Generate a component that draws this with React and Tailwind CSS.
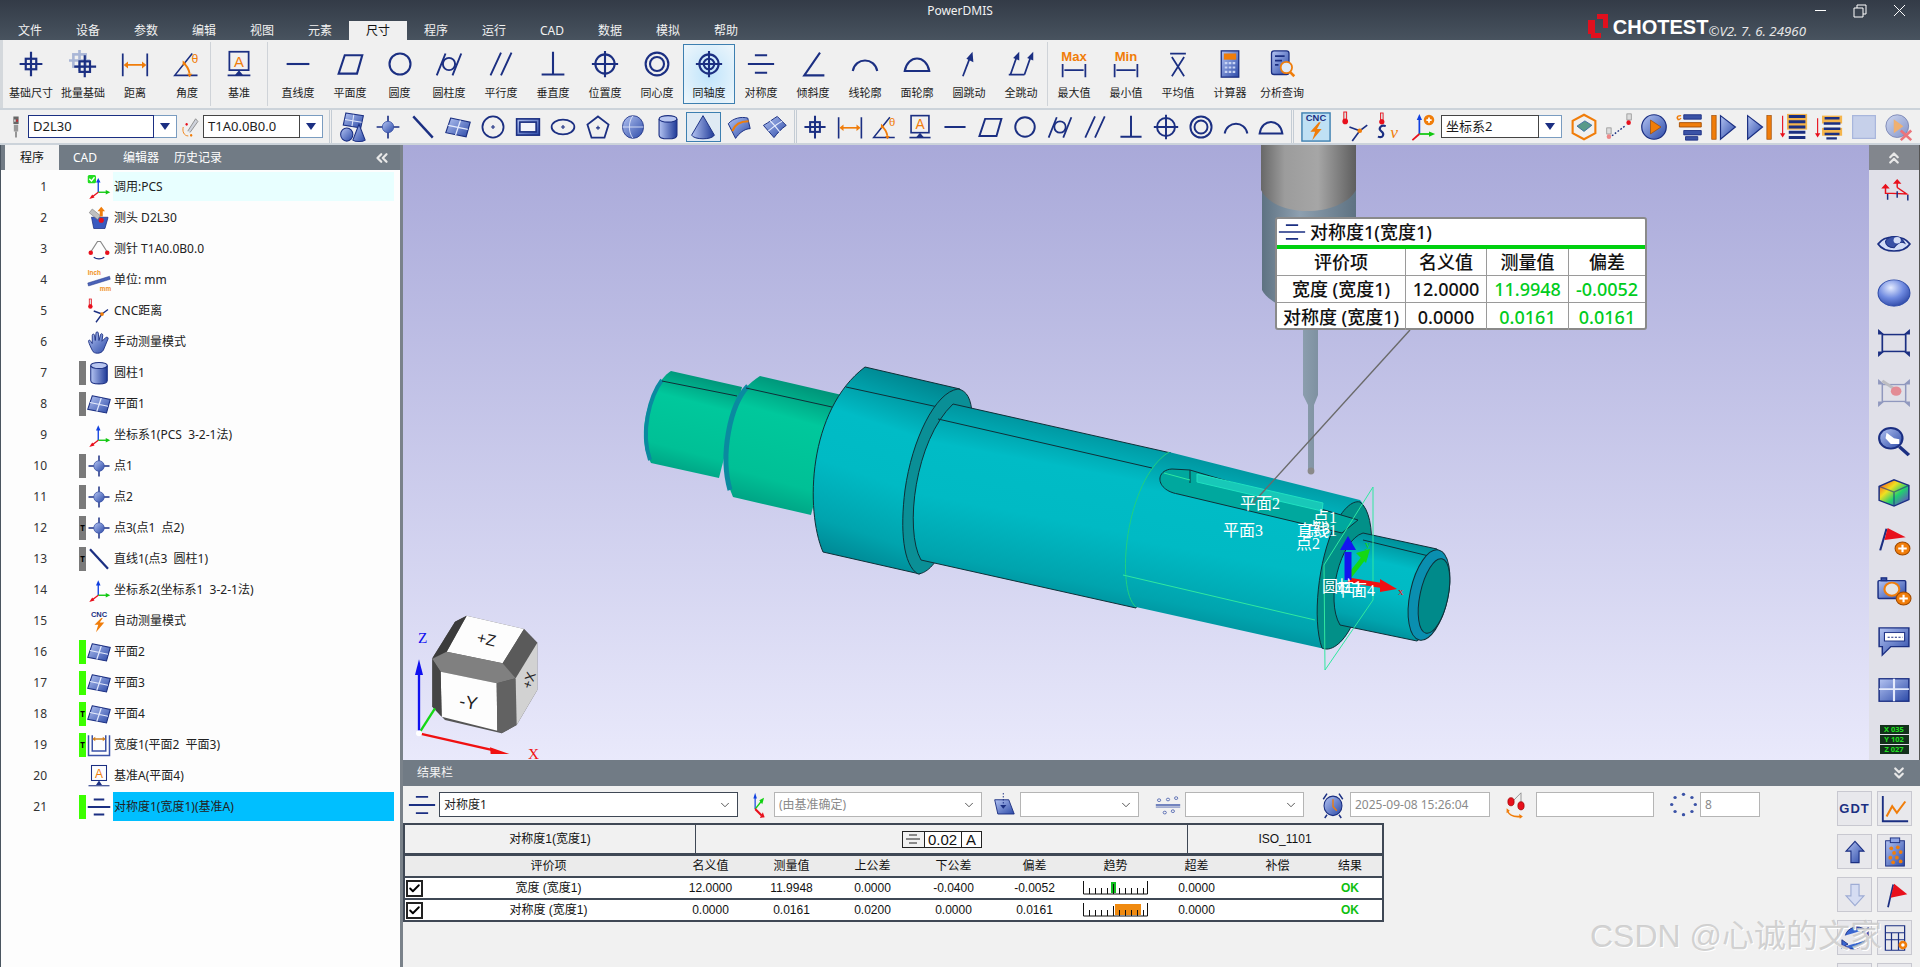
import React from 'react';
import { ChevronDown, ChevronsLeft, ChevronsUp, ChevronsDown, Check } from 'lucide-react';

const N = '#1b2f82';
const O = '#f07d0a';
const R = '#e8101c';

// icon drawings, all on a 32 box
const G = {
  base: <g strokeWidth="2.5"><path d="M16 2V30M3 16H29" /><rect x="10" y="10" width="12" height="12" /></g>,
  batch: <g><g stroke="#a9b6d6" strokeWidth="3"><path d="M12 0V24M0 12H24" /><rect x="5" y="5" width="14" height="14" /></g><g strokeWidth="2.5"><path d="M18 6V31M6 19H31" /><rect x="12" y="13" width="12" height="12" /></g></g>,
  dist: <g strokeWidth="2"><path d="M2 4V30M30 4V30" /><path d="M6 17H26" stroke={O} /><path d="M3 17L8 13V21ZM29 17L24 13V21Z" fill={O} stroke="none" /></g>,
  angle: <g strokeWidth="1.8"><path d="M22 4L2 29H28" /><path d="M12 15C16 18 18 22 19 27" stroke={O} strokeWidth="2.2" /><path d="M11 12L15 15L11 18ZM16 27H22L19 31Z" fill={O} stroke="none" /><text x="21" y="15" fontSize="14" fill={O} stroke="none" fontFamily="Liberation Sans">θ</text></g>,
  datum: <g strokeWidth="2"><rect x="5" y="2" width="22" height="21" /><text x="16" y="19" fontSize="17" textAnchor="middle" fill={O} stroke="none" fontFamily="Liberation Sans">A</text><path d="M16 23L11 29H21Z" fill={N} stroke="none" /><path d="M3 29H29" /></g>,
  straight: <path d="M3 16H29" strokeWidth="2.4" />,
  flat: <path d="M10 6H30L24 27H3Z" strokeWidth="2.4" />,
  circle: <circle cx="16" cy="16" r="12" strokeWidth="2.4" />,
  cyl: <g strokeWidth="2.2"><path d="M2 29L12 4M20 29L30 4" /><circle cx="16" cy="16" r="7" /></g>,
  parallel: <path d="M4 29L16 3M16 29L28 3" strokeWidth="2.2" />,
  perp: <path d="M16 2V28M3 28H29" strokeWidth="2.4" />,
  pos: <g strokeWidth="2.4"><circle cx="16" cy="16" r="11" /><path d="M16 1V31M1 16H31" /></g>,
  conc: <g strokeWidth="2.4"><circle cx="16" cy="16" r="13" /><circle cx="16" cy="16" r="8" /></g>,
  coax: <g strokeWidth="2.4"><circle cx="16" cy="16" r="11" /><circle cx="16" cy="16" r="6" /><path d="M16 1V31M1 16H31" /></g>,
  sym: <path d="M9 6H23M1 16H31M9 26H23" strokeWidth="2.4" />,
  incl: <path d="M24 3L6 29H29" strokeWidth="2.4" />,
  lprof: <path d="M2 24C5 8 27 8 30 24" strokeWidth="2.4" />,
  sprof: <path d="M2 24C5 5 27 5 30 24ZM2 24H30" strokeWidth="2.4" />,
  runout: <g strokeWidth="2"><path d="M9 30L17 9" /><path d="M20 2L21 14L13 10Z" fill={N} stroke="none" /></g>,
  total: <g strokeWidth="2"><path d="M4 28L11 8M20 28L27 8M2 28H20" /><path d="M14 2L14 12L7 9ZM30 2L30 12L23 9Z" fill={N} stroke="none" /></g>,
  max: <g strokeWidth="2"><text x="16" y="13" fontSize="15" fontWeight="700" textAnchor="middle" fill={O} stroke="none" fontFamily="Liberation Sans">Max</text><path d="M3 16V31M29 16V31M5 23H27" /></g>,
  min: <g strokeWidth="2"><text x="16" y="13" fontSize="15" fontWeight="700" textAnchor="middle" fill={O} stroke="none" fontFamily="Liberation Sans">Min</text><path d="M3 16V31M29 16V31M5 23H27" /></g>,
  avg: <path d="M7 4H25M9 8L23 30M23 8L9 30" strokeWidth="2" />,
  calc: <g><rect x="6" y="1" width="20" height="30" fill="url(#bl)" strokeWidth="1.5" /><rect x="9" y="4" width="14" height="7" fill={O} stroke="none" /><path d="M10 15H22M10 20H22M10 25H22" stroke="#c8d4f4" strokeWidth="2.5" strokeDasharray="3 1.5" /></g>,
  analyze: <g><rect x="4" y="1" width="20" height="27" rx="3" fill="url(#bl)" strokeWidth="1.5" /><path d="M8 7H19M8 12H16M8 17H12" stroke={N} strokeWidth="2" /><circle cx="21" cy="20" r="6.5" fill="#dfe9f7" stroke={O} strokeWidth="2" /><path d="M25 25L30 30" stroke={O} strokeWidth="3" /></g>,

  fgroup: <g strokeWidth="1.2"><path d="M9 1L29 4L26 17L6 14Z" fill="url(#bl)" /><path d="M18 3L16 15M8 8L27 11" stroke="#dfe6fa" /><circle cx="10" cy="24" r="7" fill="url(#bl)" /><path d="M24 13L31 30C28 32 20 32 17 30Z" fill="url(#bl)" /></g>,
  fpoint: <g strokeWidth="2"><path d="M16 2V30M2 16H30" /><circle cx="16" cy="16" r="7" fill="url(#bl)" stroke="#3a52a6" strokeWidth="1" /></g>,
  fline: <path d="M4 3L28 29" strokeWidth="3" />,
  fplane: <g strokeWidth="1.4"><path d="M7 5L31 10L26 28L1 23Z" fill="url(#bl)" /><path d="M19 8L13 26M4 14L28 19" stroke="#e4eafc" strokeWidth="1.6" /></g>,
  fcircle: <g strokeWidth="2.2"><circle cx="16" cy="16" r="13" /><path d="M13.5 16H18.5M16 13.5V18.5" strokeWidth="1.4" /></g>,
  frect: <g strokeWidth="2"><rect x="2" y="6" width="28" height="20" fill="url(#bl)" /><rect x="6" y="10" width="20" height="12" fill="#f2f4fb" /></g>,
  fellipse: <g strokeWidth="2.2"><ellipse cx="16" cy="16" rx="14" ry="9" /><path d="M13.5 16H18.5M16 13.5V18.5" strokeWidth="1.4" /></g>,
  fpoly: <g strokeWidth="2.2"><path d="M16 3L29 13L24 29H8L3 13Z" /><path d="M13.5 17H18.5M16 14.5V19.5" strokeWidth="1.4" /></g>,
  fsphere: <g strokeWidth="1"><ellipse cx="16" cy="16" rx="13" ry="14" fill="url(#bl)" /><path d="M16 2C10 10 10 22 16 30M3 16H29" stroke="#e4eafc" /></g>,
  fcyl: <g strokeWidth="1.4"><path d="M5 6V26C5 32 27 32 27 26V6" fill="url(#blh)" /><ellipse cx="16" cy="6" rx="11" ry="4" fill="#b8c6f0" /></g>,
  fcone: <g strokeWidth="1.2"><path d="M16 2L30 26C27 32 5 32 2 26Z" fill="url(#blh)" /></g>,
  fcurve: <g strokeWidth="1.2"><path d="M4 12C10 5 20 3 28 5L31 18C24 18 17 24 13 30Z" fill="url(#bl)" /><path d="M9 21C12 13 20 9 29 9" stroke={O} strokeWidth="2.5" /></g>,
  ffree: <g strokeWidth="1.2"><path d="M3 14C10 10 15 6 20 3L31 14C25 18 20 24 16 29Z" fill="url(#bl)" /><path d="M9 21C14 17 20 12 26 9M11 8C16 13 20 18 23 22" stroke="#e4eafc" strokeWidth="1.4" /></g>,

  cnc: <g><rect x="1" y="1" width="30" height="30" fill="#bfe0f4" stroke="#3d7fb0" strokeWidth="1.5" /><text x="16" y="10" fontSize="10" fontWeight="700" textAnchor="middle" fill={N} stroke="none" fontFamily="Liberation Sans">CNC</text><path d="M19 11L10 21H15L12 30L22 18H17L21 11Z" fill={O} stroke="none" /></g>,
  cncbare: <g><text x="16" y="10" fontSize="10" fontWeight="700" textAnchor="middle" fill={N} stroke="none" fontFamily="Liberation Sans">CNC</text><path d="M19 12L10 21H15L12 31L23 18H17L21 12Z" fill={O} stroke="none" /></g>,
  cncdist: <g strokeWidth="1.8"><rect x="3" y="0" width="3" height="8" fill="#ddd" strokeWidth="1" stroke={R} /><circle cx="4.5" cy="10" r="3" fill={R} stroke="none" /><path d="M28 14L20 20L12 31M20 20L9 16" /><circle cx="20" cy="20" r="2.5" fill={O} stroke="none" /></g>,
  sv: <g><rect x="4" y="0" width="3" height="8" fill="#ddd" stroke={R} strokeWidth="1" /><circle cx="5.5" cy="10" r="3" fill={R} stroke="none" /><path d="M10 15C4 13 1 18 5 21C9 24 7 29 1 27" strokeWidth="2.4" /><text x="15" y="29" fontSize="20" fontStyle="italic" fill={O} stroke="none" fontFamily="Liberation Serif">v</text></g>,
  axesadd: <g strokeWidth="2"><path d="M13 24V6" stroke="#1040e0" /><path d="M13 1L10 8H16Z" fill="#1040e0" stroke="none" /><path d="M13 24H26" stroke="#10c810" /><path d="M31 24L24 21V27Z" fill="#10c810" stroke="none" /><path d="M13 24L5 31" stroke={R} /><circle cx="24" cy="8" r="6" fill={O} stroke="none" /><path d="M21 8H27M24 5V11" stroke="#fff" /></g>,
  pkg: <g strokeWidth="2.4"><path d="M16 2L29 9V23L16 30L3 23V9Z" stroke={O} /><path d="M8 15L17 9L25 14L16 21Z" fill="#5a9a8a" stroke="#3a6aa0" strokeWidth="1" /></g>,
  move: <g><rect x="25" y="1" width="5" height="7" fill="#ddd" stroke="#888" strokeWidth=".8" /><circle cx="27" cy="11" r="2.6" fill={R} stroke="none" /><rect x="2" y="17" width="5" height="7" fill="#ddd" stroke="#888" strokeWidth=".8" /><circle cx="4.5" cy="27" r="2.6" fill="#e88" stroke="none" /><path d="M8 26L24 14" strokeWidth="1.6" strokeDasharray="2 2" /></g>,
  play: <g><circle cx="16" cy="16" r="14" fill="url(#bl)" strokeWidth="1.4" /><path d="M12 8L24 16L12 24Z" fill={O} stroke="#a04a00" strokeWidth=".8" /></g>,
  step: <g><path d="M4 8C1 3 4 3 7 3M4 8L2 5M4 8L7 6" stroke={O} strokeWidth="1.6" /><path d="M10 2H30V7H10ZM10 20H30V25H10Z" fill="#3a52a6" strokeWidth="1" /><path d="M5 11H30V16H5Z" fill={O} stroke="#a04a00" strokeWidth="1" /><path d="M12 27H26V31H12Z" fill="#3a52a6" strokeWidth="1" /></g>,
  runbar: <g><rect x="2" y="3" width="5" height="27" fill={O} stroke="#a04a00" strokeWidth=".8" /><path d="M12 3L29 16L12 30Z" fill="url(#bl)" strokeWidth="1.4" /></g>,
  barrun: <g><path d="M3 3L20 16L3 30Z" fill="url(#bl)" strokeWidth="1.4" /><rect x="25" y="3" width="5" height="27" fill={O} stroke="#a04a00" strokeWidth=".8" /></g>,
  dn1: <g><path d="M3 3V25" stroke={R} strokeWidth="1.3" /><path d="M0 23H6L3 28Z" fill={R} stroke="none" /><rect x="8" y="1" width="23" height="18" fill="#f5b54c" stroke="none" /><path d="M10 4H29M10 10H29M10 16H29M10 22H29M10 28H29" strokeWidth="3.4" /></g>,
  dn2: <g><path d="M3 6V25" stroke={R} strokeWidth="1.3" /><path d="M0 23H6L3 28Z" fill={R} stroke="none" /><rect x="8" y="3" width="23" height="9" fill="#f5b54c" stroke="none" /><rect x="8" y="17" width="23" height="9" fill="#f5b54c" stroke="none" /><path d="M11 6H28M10 12H29M10 18H29M11 24H28M13 29H25" strokeWidth="2.6" /></g>,
  stopb: <rect x="3" y="3" width="26" height="26" fill="#c6d0ea" stroke="#a8b6dc" strokeWidth="1.4" />,
  noplay: <g opacity=".55"><circle cx="14" cy="15" r="13" fill="url(#bl)" strokeWidth="1" /><path d="M10 7L21 15L10 23Z" fill={O} stroke="none" /><path d="M18 20L30 31M30 20L18 31" stroke={R} strokeWidth="3" /></g>,

  pcs: <g strokeWidth="1.8"><path d="M15 23V8" stroke="#1040e0" /><path d="M15 4L12 10H18Z" fill="#1040e0" stroke="none" /><path d="M15 23H27" stroke="#10c810" /><path d="M31 23L25 20V26Z" fill="#10c810" stroke="none" /><path d="M15 23L6 30" stroke={R} /><path d="M3 32L7 26L10 30Z" fill={R} stroke="none" /><rect x="1" y="0" width="11" height="11" rx="2" fill="#22dd22" stroke="none" /><path d="M3 5L6 8L10 3" stroke="#fff" /></g>,
  axes: <g strokeWidth="1.8"><path d="M15 23V8" stroke="#1040e0" /><path d="M15 3L12 10H18Z" fill="#1040e0" stroke="none" /><path d="M15 23H27" stroke="#10c810" /><path d="M31 23L25 20V26Z" fill="#10c810" stroke="none" /><path d="M15 23L6 30" stroke={R} /><path d="M3 32L7 26L10 30Z" fill={R} stroke="none" /></g>,
  head: <g><path d="M6 15H28L24 30H9Z" fill="#3a5ac0" strokeWidth="1" /><path d="M3 9L7 4L18 13L14 18Z" fill="#c0c0c0" stroke="#777" strokeWidth=".8" /><circle cx="19" cy="19" r="3.4" fill={R} stroke="none" /><path d="M19 1L24 7H21V14H17V7H14Z" fill={O} stroke="none" /></g>,
  stylus: <g strokeWidth="1.6"><path d="M5 20L14 6H18L27 20" stroke="#888" /><circle cx="5" cy="21" r="3" fill={R} stroke="none" /><circle cx="27" cy="21" r="3" fill={R} stroke="none" /><path d="M9 27C13 30 19 30 23 27" /></g>,
  unit: <g><text x="1" y="9" fontSize="8.5" fontWeight="700" fill="#f09020" stroke="none" fontFamily="Liberation Sans">Inch</text><path d="M1 20L30 11L31 15L2 24Z" fill="#4a62b8" strokeWidth=".6" /><text x="17" y="31" fontSize="8.5" fontWeight="700" fill="#f09020" stroke="none" fontFamily="Liberation Sans">mm</text></g>,
  hand: <path d="M7 27C5 23 3 19 2 15C2 13 4 13 5 15L7 18L7 7C7 5 10 5 10 7L11 14L12 4C12 2 15 2 15 4L16 14L18 6C19 4 21 5 21 7L20 15L25 10C27 9 29 10 28 12L23 24C22 28 19 31 14 31C11 31 8 30 7 27Z" fill="url(#bl)" strokeWidth="1.2" />,
  widthi: <g strokeWidth="2"><path d="M2 3V30H30V3M7 3V24H25V3" fill="none" stroke="#3a52a6" /><path d="M10 8H22" stroke="#d08020" /><path d="M7 8L11 5V11ZM25 8L21 5V11Z" fill="#d08020" stroke="none" /></g>,
  datumthin: <g strokeWidth="1.4"><rect x="6" y="2" width="20" height="20" /><text x="16" y="18" fontSize="16" textAnchor="middle" fill={O} stroke="none" fontFamily="Liberation Sans">A</text><path d="M16 22L12 28H20Z" fill={N} stroke="none" /><path d="M2 29H30" /></g>,
  probehead: <g strokeWidth="1"><rect x="10" y="2" width="12" height="10" fill="#666" stroke="none" /><rect x="12" y="6" width="3" height="3" fill="#eee" stroke="none" /><rect x="17" y="6" width="3" height="3" fill={R} stroke="none" /><rect x="11" y="13" width="10" height="9" fill="#999" stroke="none" /><rect x="14" y="22" width="4" height="8" fill="#888" stroke="none" /></g>,
  tip: <g strokeWidth="1.4"><path d="M12 22L26 4L30 8L16 24" fill="#cfd3dc" stroke="#888" /><path d="M4 16C2 22 5 29 13 29" stroke={O} /><circle cx="10" cy="12" r="2" fill={R} stroke="none" /><circle cx="18" cy="28" r="2" fill={O} stroke="none" /></g>,

  axis2: <g strokeWidth="2"><path d="M12 21V7" stroke="#1040e0" /><path d="M12 1L9 8H15Z" fill="#1040e0" stroke="none" /><path d="M12 21L23 11" stroke="#10d010" /><path d="M27 7L19 10L24 15Z" fill="#10d010" stroke="none" /><path d="M12 21L23 29" stroke={R} strokeWidth="3" /><path d="M28 31L20 32L25 25Z" fill={R} stroke="none" /></g>,
  projplane: <g strokeWidth="1.2"><path d="M6 9H24L31 28H10Z" fill="url(#bl)" /><path d="M17 0V20" strokeDasharray="2 2" /><path d="M13 16H21L17 21Z" fill={N} stroke="none" /></g>,
  filter: <g><path d="M1 16H31" strokeWidth="2" stroke="#3a52a6" /><path d="M1 19H31" strokeWidth="1" stroke="#3a52a6" /><circle cx="5" cy="9" r="2" fill="none" stroke="#3a52a6" /><circle cx="16" cy="8" r="2" fill="none" stroke="#3a52a6" /><circle cx="26" cy="6" r="2" fill="none" stroke="#3a52a6" /><circle cx="12" cy="27" r="2" fill="none" stroke="#3a52a6" /><circle cx="22" cy="25" r="2" fill="none" stroke="#3a52a6" /></g>,
  clock: <g strokeWidth="1.4"><circle cx="16" cy="17" r="12" fill="url(#bl)" /><path d="M16 9V18L21 23" stroke={O} strokeWidth="1.8" /><path d="M3 9L8 2M29 9L24 2M8 28L5 32M24 28L27 32" strokeWidth="2" /></g>,
  cherries: <g strokeWidth="1"><path d="M10 12L24 1V15" stroke="#777" /><circle cx="8" cy="12" r="5" fill={R} stroke="#900" /><circle cx="24" cy="17" r="5" fill={R} stroke="#900" /><path d="M2 23C6 30 14 31 24 30" stroke={O} strokeWidth="2" /><path d="M1 20L6 23L1 26ZM21 27L27 30L22 33Z" fill={O} stroke="none" /></g>,
  ring: <g fill="#3a52a6" stroke="none"><circle cx="16" cy="3" r="2" /><circle cx="26" cy="7" r="2" /><circle cx="30" cy="16" r="2" /><circle cx="26" cy="25" r="2" /><circle cx="16" cy="29" r="2" /><circle cx="6" cy="25" r="2" /><circle cx="2" cy="16" r="2" /><circle cx="6" cy="7" r="2" /></g>,

  chart: <g strokeWidth="2"><path d="M3 2V29H30" /><path d="M7 24L13 13L18 20L27 8" stroke={O} strokeWidth="2.2" /></g>,
  up: <path d="M16 3L27 15H21V29H11V15H5Z" fill="url(#bl)" strokeWidth="1.4" />,
  down: <path d="M16 29L27 17H21V3H11V17H5Z" fill="#d5dcf2" stroke="#9eacd4" strokeWidth="1.4" />,
  clip: <g strokeWidth="1"><rect x="6" y="4" width="20" height="27" fill="url(#bl)" /><rect x="11" y="1" width="10" height="5" fill="#8fa4e4" /><g fill={O} stroke="none"><circle cx="12" cy="12" r="2" /><circle cx="19" cy="11" r="2" /><circle cx="22" cy="16" r="2" /><circle cx="15" cy="17" r="2" /><circle cx="11" cy="22" r="2" /><circle cx="18" cy="22" r="2" /><circle cx="22" cy="26" r="2" /><circle cx="14" cy="27" r="2" /></g></g>,
  flag: <g strokeWidth="2"><path d="M8 30L14 4" /><path d="M15 3L30 15L11 19Z" fill={R} stroke="none" /></g>,
  refresh: <g strokeWidth="1"><path d="M5 13C7 4 20 0 28 7L24 9L31 14L31 4L29 6" fill="#3a66d0" /><path d="M27 19C25 28 12 32 4 25L8 23L1 18L1 28L3 26" fill="#3a66d0" /></g>,
  tablegear: <g strokeWidth="1.4"><path d="M5 2H27V30H5ZM5 10H27M5 18H27M12 10V30M20 10V30" /><circle cx="25" cy="24" r="5" fill={O} stroke="none" /><circle cx="25" cy="24" r="2" fill="#fff" stroke="none" /></g>,

  tAxes: <g strokeWidth="1.4" stroke={R}><path d="M8 16V8M19 9V1M8 15L28 16L19 9" /><path d="M4 10L8 5L12 10ZM15 5L19 0L23 5" fill={R} stroke="none" /><path d="M10 16V22M19 13V20M29 17V23" stroke={N} /></g>,
  tEye: <g><path d="M1 16C7 6 25 6 31 16C25 26 7 26 1 16Z" fill="#d4ddf6" strokeWidth="1.6" /><path d="M8 13C12 6 22 6 26 15C22 12 18 17 16 20C11 20 8 17 8 13Z" fill="#3a52a6" strokeWidth="1" /><circle cx="19" cy="12" r="3.4" fill="#d4ddf6" stroke="none" /></g>,
  tSphere: <ellipse cx="16" cy="16" rx="15" ry="14" fill="url(#sph)" strokeWidth="1" stroke="#2c4aa8" />,
  tFrame: <g strokeWidth="1.6"><rect x="5" y="7" width="22" height="18" /><path d="M1 1V7H7ZM31 1V7H25ZM1 31V25H7ZM31 31V25H25Z" fill={N} stroke="none" /></g>,
  tProbe: <g opacity=".4" strokeWidth="1.4"><rect x="5" y="7" width="22" height="18" /><path d="M1 1V7H7ZM31 1V7H25ZM1 31V25H7ZM31 31V25H25Z" fill={N} stroke="none" /><path d="M5 3L18 13" stroke="#888" strokeWidth="3" /><circle cx="18" cy="14" r="5" fill={R} stroke="none" /></g>,
  tMag: <g strokeWidth="2"><circle cx="13" cy="12" r="11" fill="url(#bl)" /><path d="M21 21L30 30" strokeWidth="3.4" /><path d="M9 6L16 12L21 13V18H13L8 12Z" fill="#fff" stroke="none" /></g>,
  tCube: <g strokeWidth="1.4"><path d="M2 10L16 3L30 9V24L16 31L2 25Z" fill="url(#rainbow)" /><path d="M2 10L16 16L30 9M16 16V31" strokeOpacity=".6" /></g>,
  tFlag: <g strokeWidth="2"><path d="M3 26L9 3" /><path d="M10 2L27 12L7 15Z" fill={R} stroke="none" /><circle cx="24" cy="24" r="7" fill={O} stroke="#a04a00" strokeWidth="1" /><path d="M20 24H28M24 20V28" stroke="#fff" /></g>,
  tCam: <g strokeWidth="1.4"><rect x="1" y="5" width="26" height="19" rx="1" fill="url(#bl)" /><rect x="4" y="2" width="5" height="3" fill="#3a52a6" /><circle cx="14" cy="14" r="7" fill="#e4e4e4" stroke={O} strokeWidth="2" /><circle cx="25" cy="24" r="7" fill={O} stroke="#a04a00" strokeWidth="1" /><path d="M21 24H29M25 20V28" stroke="#fff" strokeWidth="2" /></g>,
  tChat: <g strokeWidth="1.4"><path d="M2 2H30V22H13L5 31V22H2Z" fill="url(#bl)" /><rect x="7" y="7" width="19" height="9" fill="#fff" strokeWidth="1" /><path d="M10 12H24" strokeWidth="1" strokeDasharray="2 1.4" /></g>,
  tGrid: <g strokeWidth="1.4"><rect x="2" y="4" width="28" height="24" fill="url(#bl)" /><path d="M16 4V28M2 15H30" stroke="#e4eafc" strokeWidth="2" /></g>,
};

const Ic = ({ n, s = 28, w, h, className }) => (
  <svg
    viewBox="0 0 32 32"
    width={w || s}
    height={h || s}
    fill="none"
    stroke={N}
    preserveAspectRatio="none"
    className={'shrink-0 overflow-visible ' + (className || '')}
  >
    {G[n]}
  </svg>
);

const RibbonBtn = ({ icon, label, active, w = 'w-[52px]' }) => (
  <div
    className={
      w +
      ' h-[60px] flex flex-col items-center pt-[5px] border ' +
      (active
        ? 'border-[#3d7fb0] bg-[radial-gradient(ellipse_at_center,#bfe4fb,#eef6fb)]'
        : 'border-transparent')
    }
  >
    <Ic n={icon} s={28} />
    <span className="mt-[8px] text-[11px] leading-[14px] text-[#1c1c1c] whitespace-nowrap">{label}</span>
  </div>
);

const Sep = ({ className }) => <div className={'w-px h-[64px] bg-[#cfd3d8] ' + className} />;

const menus = ['文件', '设备', '参数', '编辑', '视图', '元素', '尺寸', '程序', '运行', 'CAD', '数据', '模拟', '帮助'];

const geo = [
  ['straight', '直线度'], ['flat', '平面度'], ['circle', '圆度'], ['cyl', '圆柱度'], ['parallel', '平行度'],
  ['perp', '垂直度'], ['pos', '位置度'], ['conc', '同心度'], ['coax', '同轴度'], ['sym', '对称度'],
  ['incl', '倾斜度'], ['lprof', '线轮廓'], ['sprof', '面轮廓'], ['runout', '圆跳动'], ['total', '全跳动'],
];

const features = ['fpoint', 'fline', 'fplane', 'fcircle', 'frect', 'fellipse', 'fpoly', 'fsphere', 'fcyl', 'fcone', 'fcurve', 'ffree'];
const dims = ['base', 'dist', 'angle', 'datum', 'straight', 'flat', 'circle', 'cyl', 'parallel', 'perp', 'pos', 'conc', 'lprof', 'sprof'];
const runs = ['pkg', 'move', 'play', 'step', 'runbar', 'barrun', 'dn1', 'dn2', 'stopb', 'noplay'];

const program = [
  { icon: 'pcs', label: '调用:PCS', bg: 'bg-[#e8ffff]' },
  { icon: 'head', label: '测头 D2L30' },
  { icon: 'stylus', label: '测针 T1A0.0B0.0' },
  { icon: 'unit', label: '单位: mm' },
  { icon: 'cncdist', label: 'CNC距离' },
  { icon: 'hand', label: '手动测量模式' },
  { icon: 'fcyl', label: '圆柱1', mark: 'bg-[#7a7a7a]' },
  { icon: 'fplane', label: '平面1', mark: 'bg-[#7a7a7a]' },
  { icon: 'axes', label: '坐标系1(PCS  3-2-1法)' },
  { icon: 'fpoint', label: '点1', mark: 'bg-[#7a7a7a]' },
  { icon: 'fpoint', label: '点2', mark: 'bg-[#7a7a7a]' },
  { icon: 'fpoint', label: '点3(点1  点2)', mark: 'bg-[#7a7a7a]', t: true },
  { icon: 'fline', label: '直线1(点3  圆柱1)', mark: 'bg-[#7a7a7a]', t: true },
  { icon: 'axes', label: '坐标系2(坐标系1  3-2-1法)' },
  { icon: 'cncbare', label: '自动测量模式' },
  { icon: 'fplane', label: '平面2', mark: 'bg-[#3cff00]' },
  { icon: 'fplane', label: '平面3', mark: 'bg-[#3cff00]' },
  { icon: 'fplane', label: '平面4', mark: 'bg-[#3cff00]', t: true },
  { icon: 'widthi', label: '宽度1(平面2  平面3)', mark: 'bg-[#3cff00]', t: true },
  { icon: 'datumthin', label: '基准A(平面4)' },
  { icon: 'sym', label: '对称度1(宽度1)(基准A)', mark: 'bg-[#3cff00]', bg: 'bg-[#00bfff]' },
];

const Drop = ({ width, text, grey }) => (
  <div
    className={
      'h-[25px] flex items-center justify-between pl-[4px] pr-[5px] bg-white border shrink-0 text-[12px] ' +
      (grey ? 'border-[#b5b5b5] text-[#8a8a8a] ' : 'border-[#3f4855] text-[#1c1c1c] ') +
      width
    }
  >
    <span className="whitespace-nowrap">{text}</span>
    <ChevronDown size={14} strokeWidth={1.4} color="#333" />
  </div>
);

const Field = ({ width, text }) => (
  <div className={'h-[25px] flex items-center pl-[4px] bg-white border border-[#b5b5b5] shrink-0 text-[12px] text-[#8a8a8a] ' + width}>
    {text}
  </div>
);

const Combo = ({ box, text, border }) => (
  <div className="flex h-[23px] shrink-0">
    <div className={'flex items-center pl-[4px] bg-white border text-[13px] text-[#1c1c1c] ' + box + ' ' + border}>{text}</div>
    <div className="w-[23px] flex items-center justify-center bg-white border border-l-0 border-[#7a9cc0]">
      <div className="w-0 h-0 border-l-[5px] border-r-[5px] border-t-[7px] border-l-transparent border-r-transparent border-t-[#1b2f82]" />
    </div>
  </div>
);

const ToolBtn = ({ children }) => (
  <div className="w-[35px] h-[35px] flex items-center justify-center bg-[#e8e8ec] border border-[#c8c8d0]">{children}</div>
);

const Trend = ({ from, width, color }) => (
  <svg width="65" height="14" viewBox="0 0 65 14">
    <rect x={from} y="1" width={width} height="11" fill={color} />
    <path
      d="M0.5 0V13H64.5V0M6.5 7V13M12.5 7V13M18.5 7V13M24.5 7V13M30.5 3V13M36.5 7V13M42.5 7V13M48.5 7V13M54.5 7V13M60.5 7V13"
      stroke="#111"
      fill="none"
    />
  </svg>
);

const resultRows = [
  { check: true, name: '宽度 (宽度1)', vals: ['12.0000', '11.9948', '0.0000', '-0.0400', '-0.0052'], trend: [28, 5, '#10c020'], over: '0.0000' },
  { check: true, name: '对称度 (宽度1)', vals: ['0.0000', '0.0161', '0.0200', '0.0000', '0.0161'], trend: [32, 26, '#f08a10'], over: '0.0000' },
];

const Shaft = () => (
  <svg viewBox="403 145 1466 615" className="block w-full h-full">
    <defs>
      <linearGradient id="bl" x1="0" y1="0" x2="1" y2="1">
        <stop offset="0" stopColor="#b4c4f2" />
        <stop offset="1" stopColor="#2c4aa8" />
      </linearGradient>
      <linearGradient id="blh" x1="0" y1="0" x2="1" y2="0">
        <stop offset="0" stopColor="#b4c4f2" />
        <stop offset="1" stopColor="#1f3a98" />
      </linearGradient>
      <radialGradient id="sph" cx=".4" cy=".3" r=".8">
        <stop offset="0" stopColor="#e4ebff" />
        <stop offset=".5" stopColor="#6f8ae0" />
        <stop offset="1" stopColor="#223c9c" />
      </radialGradient>
      <linearGradient id="rainbow" x1="0" y1="0" x2="1" y2="1">
        <stop offset="0" stopColor="#ff3020" />
        <stop offset=".35" stopColor="#f0e020" />
        <stop offset=".6" stopColor="#20d070" />
        <stop offset="1" stopColor="#8020e0" />
      </linearGradient>
      <linearGradient id="teal" x1=".62" y1="0" x2=".38" y2="1">
        <stop offset="0" stopColor="#00808a" />
        <stop offset=".3" stopColor="#00bcc6" />
        <stop offset=".55" stopColor="#00bac4" />
        <stop offset=".82" stopColor="#00a4ae" />
        <stop offset="1" stopColor="#008490" />
      </linearGradient>
      <linearGradient id="mint" x1=".62" y1="0" x2=".38" y2="1">
        <stop offset="0" stopColor="#008a72" />
        <stop offset=".3" stopColor="#00c89c" />
        <stop offset=".75" stopColor="#00c096" />
        <stop offset="1" stopColor="#009c80" />
      </linearGradient>
      <linearGradient id="body" x1="0" y1="0" x2="1" y2="0">
        <stop offset="0" stopColor="#686868" />
        <stop offset=".25" stopColor="#9c9c9c" />
        <stop offset=".6" stopColor="#a6a6a6" />
        <stop offset="1" stopColor="#5e5e5e" />
      </linearGradient>
      <linearGradient id="bodyb" x1="0" y1="0" x2="1" y2="0">
        <stop offset="0" stopColor="#5e7282" />
        <stop offset=".4" stopColor="#8ea0b0" />
        <stop offset="1" stopColor="#5e7282" />
      </linearGradient>
    </defs>

    {/* probe */}
    <path d="M1262 188V290C1266 300 1290 312 1303 314V395L1308 405V470H1314V405L1318 395V314C1330 312 1352 300 1356 290V188Z" fill="url(#bodyb)" />
    <path d="M1261 145H1356V190C1340 218 1275 218 1261 190Z" fill="url(#body)" />
    <circle cx="1311" cy="471" r="3.4" fill="#8a8a8a" />

    {/* shaft, far end first */}
    <g stroke="#0f3038" strokeWidth="1">
      <path d="M671 371L742 387L719 478L651 463C632 430 655 380 671 371Z" fill="url(#mint)" stroke="none" />
      <path d="M662 380C650 396 640 432 650 460" stroke="#0a8aa0" strokeWidth="4" fill="none" />
      <path d="M662 381L737 396" fill="none" />
      <path d="M760 376L842 395L811 515L733 497C712 450 728 395 760 376Z" fill="url(#mint)" stroke="none" />
      <path d="M748 386C730 405 720 455 730 490" stroke="#0a8aa0" strokeWidth="5" fill="none" />
      <path d="M746 388L832 407" fill="none" />
      <path d="M865 367L960 389L920 574L823 552C805 510 808 410 865 367Z" fill="url(#teal)" />
      <path d="M846 387L938 407" fill="none" />
      <path d="M958 389C976 392 975 425 965 470C955 530 938 572 918 574C903 565 900 530 905 490C912 440 935 392 958 389Z" fill="#0a8f96" />
      <path d="M953 404L1171 453L1136 608L921 560C904 530 915 440 953 404Z" fill="url(#teal)" />
      <path d="M938 419L1152 468" fill="none" />
      <path d="M1169 452L1360 500C1378 520 1370 590 1352 625C1345 640 1335 650 1325 649L1136 607C1115 590 1125 480 1169 452Z" fill="url(#teal)" stroke="none" />
      <path d="M1169 452C1125 480 1115 590 1136 607" fill="none" stroke="#20d080" />
      <path d="M1360 502C1378 515 1375 580 1352 625C1342 645 1330 652 1322 648C1312 620 1318 560 1335 525C1342 510 1352 500 1360 502Z" fill="#029088" />
      <path d="M1172 469C1155 470 1155 490 1178 494L1342 533L1358 520L1190 470Z" fill="#00a89e" />
      <path d="M1190 470L1190 483" fill="none" />
      <path d="M1197 474L1323 503L1322 511L1197 482Z" fill="#18c8b8" stroke="#20e0c0" />
      <path d="M1363 533L1437 549C1450 570 1448 620 1417 641L1340 625C1325 600 1340 540 1363 533Z" fill="url(#teal)" />
      <path d="M1363 540L1433 557" fill="none" />
      <ellipse cx="1429" cy="595" rx="19" ry="46" transform="rotate(12 1429 595)" fill="#0a8fb0" />
      <ellipse cx="1434" cy="596" rx="14" ry="38" transform="rotate(12 1434 596)" fill="#008a8a" />
    </g>

    {/* green wire frames */}
    <g fill="none" stroke="#30e8a0" strokeWidth="1">
      <path d="M1123 575L1315 620" />
      <path d="M1164 473L1190 480" />
      <path d="M1373 487L1324 565L1325 670L1373 600Z" />
    </g>

    {/* leader line */}
    <path d="M1410 330L1253 503" stroke="#6a6a6a" strokeWidth="1.4" />

    {/* part coordinate system */}
    <g>
      <path d="M1348 578L1366 555" stroke="#14d814" strokeWidth="5" />
      <path d="M1370 549L1356 553L1366 563Z" fill="#14d814" />
      <path d="M1348 580L1385 586" stroke="#f01010" strokeWidth="5" />
      <path d="M1397 589L1380 579L1380 592Z" fill="#f01010" />
      <path d="M1348 580V552" stroke="#1414f0" strokeWidth="7" />
      <path d="M1348 536L1340 550H1356Z" fill="#1414f0" />
    </g>
    <g fontFamily="Liberation Serif" fontSize="11">
      <text x="1365" y="548" fill="#14d814">y</text>
      <text x="1398" y="595" fill="#f01010">x</text>
    </g>

    {/* feature labels */}
    <g fontFamily="'Liberation Serif','Noto Sans CJK SC',serif" fontSize="16" fill="#fff">
      <text x="1240" y="509">平面2</text>
      <text x="1223" y="536">平面3</text>
      <text x="1313" y="523">点1</text>
      <text x="1297" y="536">直线1</text>
      <text x="1306" y="534">点3</text>
      <text x="1296" y="549">点2</text>
      <text x="1322" y="592">圆柱1</text>
      <text x="1335" y="596">平面4</text>
    </g>

    {/* view cube */}
    <g transform="translate(400 600) scale(.3333)">
      <path d="M372 87L412 128V270L350 375L305 400L135 360L97 320V175L165 65L200 47Z" fill="#555" />
      <path d="M200 47L372 87L308 190L140 155Z" fill="#fdfdfd" />
      <path d="M372 87L412 128L347 235L308 190Z" fill="#5a5a5a" />
      <path d="M200 47L165 65L97 175L140 155Z" fill="#3c3c3c" />
      <path d="M140 155L308 190L347 235L290 250L122 215L97 177Z" fill="#808080" />
      <path d="M122 215L290 250L292 392L125 350Z" fill="#fdfdfd" />
      <path d="M97 177L122 215L125 350L97 320Z" fill="#454545" />
      <path d="M290 250L347 235L350 375L305 400L292 392Z" fill="#626262" />
      <path d="M412 128L347 235L350 375L412 270Z" fill="#d2d2d2" />
      <g fontFamily="Liberation Sans" fill="#222">
        <text x="0" y="0" fontSize="48" textAnchor="middle" transform="translate(256 134) rotate(13)">+Z</text>
        <text x="0" y="0" fontSize="54" textAnchor="middle" transform="translate(202 325) rotate(10)">-Y</text>
        <text x="0" y="0" fontSize="40" textAnchor="middle" transform="translate(400 245) rotate(-72)">+X</text>
      </g>
      <path d="M57 400L105 325" stroke="#14d814" strokeWidth="7" />
      <path d="M57 400V215" stroke="#1010f0" strokeWidth="7" />
      <path d="M57 178L45 225H69Z" fill="#1010f0" />
      <path d="M57 400L285 452" stroke="#f01010" strokeWidth="7" />
      <path d="M328 462L270 442L272 462Z" fill="#f01010" />
      <circle cx="57" cy="400" r="9" fill="#fff" />
      <text x="54" y="130" fontSize="46" fontFamily="Liberation Serif" fill="#1010f0">Z</text>
      <text x="384" y="478" fontSize="46" fontFamily="Liberation Serif" fill="#f01010">X</text>
    </g>
  </svg>
);

const App = () => {
  return (
    <div className="w-[1920px] h-[967px] flex flex-col overflow-hidden bg-[#f0f0f0] font-['Noto_Sans','Noto_Sans_CJK_SC',sans-serif]">
      {/* title bar + menu */}
      <div className="h-[40px] shrink-0 flex flex-col bg-linear-to-b from-[#333b47] to-[#48535f] text-white">
        <div className="h-[21px] shrink-0 grid grid-cols-[1fr_auto_1fr] items-center">
          <div />
          <span className="text-[12px] leading-none text-[#f2f2f2]">PowerDMIS</span>
          <div className="flex justify-end items-center pr-[14px] gap-[26px]">
            <svg width="13" height="13" viewBox="0 0 13 13" stroke="#fff" fill="none"><path d="M1 6.5H12" /></svg>
            <svg width="14" height="14" viewBox="0 0 14 14" stroke="#fff" fill="none"><path d="M1 4H10V13H1ZM4 4V1H13V10H10" /></svg>
            <svg width="13" height="13" viewBox="0 0 13 13" stroke="#fff" fill="none"><path d="M1 1L12 12M12 1L1 12" /></svg>
          </div>
        </div>
        <div className="h-[19px] shrink-0 flex items-end pl-[1px]">
          {menus.map((m) => (
            <div
              key={m}
              className={
                'w-[58px] h-[19px] flex items-center justify-center text-[12px] leading-none ' +
                (m === '尺寸' ? 'bg-[#f0f0f0] text-[#111]' : 'text-[#f2f2f2]')
              }
            >
              {m}
            </div>
          ))}
          <div className="ml-auto mr-[114px] mb-[2px] flex items-end h-[24px]">
            <svg width="22" height="24" viewBox="0 0 22 24" className="mr-[3px]" fill="#e0101e">
              <path d="M9 0H20V14H15V5H9ZM0 6H7V19H13V24H3V20H0Z" />
            </svg>
            <span className="text-[20px] leading-[22px] font-bold text-white font-['Liberation_Sans',sans-serif]">CHOTEST</span>
            <span className="text-[13.3px] leading-[14px] italic text-[#e6e6e6] whitespace-nowrap">©V2. 7. 6. 24960</span>
          </div>
        </div>
      </div>

      {/* ribbon */}
      <div className="h-[68px] shrink-0 flex items-center pl-[2px] bg-[#f0f0f0] border-l-[3px] border-[#d4d8dc]">
        <RibbonBtn icon="base" label="基础尺寸" />
        <RibbonBtn icon="batch" label="批量基础" />
        <RibbonBtn icon="dist" label="距离" />
        <RibbonBtn icon="angle" label="角度" />
        <Sep className="-ml-[3px] mr-[2px]" />
        <RibbonBtn icon="datum" label="基准" />
        <Sep className="ml-[2px] mr-[4px]" />
        {geo.map(([icon, label]) => (
          <RibbonBtn key={label} icon={icon} label={label} active={label === '同轴度'} w={label === '圆度' ? 'w-[47px]' : 'w-[52px]'} />
        ))}
        <Sep className="mr-0" />
        <RibbonBtn icon="max" label="最大值" />
        <RibbonBtn icon="min" label="最小值" />
        <RibbonBtn icon="avg" label="平均值" />
        <RibbonBtn icon="calc" label="计算器" />
        <RibbonBtn icon="analyze" label="分析查询" />
      </div>

      {/* second toolbar */}
      <div className="h-[37px] shrink-0 flex items-center bg-[#f0f0f0] border-t-2 border-b-2 border-[#ccd3da]">
        <Ic n="probehead" w={14} h={24} className="ml-[9px] mr-[5px]" />
        <Combo box="w-[126px]" text="D2L30" border="border-[#1b2f82]" />
        <Ic n="tip" w={18} h={22} className="ml-[4px] mr-[4px]" />
        <Combo box="w-[97px]" text="T1A0.0B0.0" border="border-[#444]" />
        <div className="ml-[6px] w-[3px] h-[33px] border-x border-[#c4ccd4]" />
        <Ic n="fgroup" w={28} h={30} className="ml-[6px] mr-[4px]" />
        {features.map((f) => (
          <div key={f} className={'w-[35.1px] h-[30px] flex items-center justify-center ' + (f === 'fcone' ? 'border border-[#3d7fb0] bg-[#dfeaf4]' : '')}>
            <Ic n={f} s={26} />
          </div>
        ))}
        <div className="ml-[3px] w-[3px] h-[33px] border-x border-[#c4ccd4]" />
        {dims.map((d, i) => (
          <div key={i} className="w-[35.1px] flex items-center justify-center">
            <Ic n={d} s={26} />
          </div>
        ))}
        <div className="ml-[3px] w-[3px] h-[33px] border-x border-[#c4ccd4]" />
        <div className="w-[44px] flex justify-center"><Ic n="cnc" s={30} /></div>
        <div className="w-[36px] flex justify-center"><Ic n="cncdist" s={30} /></div>
        <div className="w-[33px] flex justify-center"><Ic n="sv" s={28} /></div>
        <div className="w-[30px] flex justify-center"><Ic n="axesadd" s={28} /></div>
        <div className="ml-[3.5px] mr-[4.5px]"><Combo box="w-[98px]" text="坐标系2" border="border-[#444]" /></div>
        {runs.map((r) => (
          <div key={r} className="w-[35px] flex justify-center"><Ic n={r} s={28} /></div>
        ))}
      </div>

      <div className="flex flex-1 min-h-0">
        {/* program tree */}
        <div className="w-[403px] shrink-0 flex flex-col bg-[#fdfdfd] border-l border-[#4a5560] border-r-[3px] border-r-[#7a828a]">
          <div className="h-[25px] shrink-0 flex items-center bg-[#717b85] text-[12px] text-white">
            <div className="w-[54px] ml-[4px] h-full flex items-center justify-center bg-[#f4f4f4] text-[#111]">程序</div>
            <div className="w-[52px] text-center">CAD</div>
            <div className="w-[60px] text-center">编辑器</div>
            <div className="w-[54px] text-center">历史记录</div>
            <ChevronsLeft size={18} strokeWidth={3} className="ml-auto mr-[9px] text-[#e8e8e8]" />
          </div>
          <div className="flex-1 pt-px">
            {program.map((row, i) => (
              <div key={i} className="h-[31px] flex items-center text-[12px] text-[#222]">
                <div className="w-[46px] text-right text-[#333]">{i + 1}</div>
                <div className="w-[32px] shrink-0" />
                <div className={'w-[7px] h-[24px] flex items-center justify-center text-[8px] font-bold text-black shrink-0 ' + (row.mark || '')}>
                  {row.t ? 'T' : ''}
                </div>
                <div className="w-[27px] flex justify-center shrink-0 pr-[2px]"><Ic n={row.icon} s={24} /></div>
                <div className={'w-[281px] h-[29px] flex items-center pl-[1px] whitespace-pre ' + (row.bg || '')}>{row.label}</div>
              </div>
            ))}
          </div>
        </div>

        <div className="flex-1 min-w-0 flex flex-col">
          {/* 3d view + right toolbar */}
          <div className="h-[615px] shrink-0 flex">
            <div className="relative w-[1466px] shrink-0 bg-linear-to-b from-[#a9a9d9] to-[#e9e9fb]">
              <Shaft />
              <div className="absolute left-[872px] top-[72px] w-[372px] h-[113px] bg-white border-2 border-[#8a8a8a] rounded-[3px] text-[18px] font-medium leading-none text-[#111]">
                <div className="h-[26px] flex items-center border-b-[4px] border-[#00d010] box-content">
                  <Ic n="sym" w={28} h={22} className="ml-[1px] mr-[4px]" />
                  <span>对称度1(宽度1)</span>
                </div>
                <div className="grid grid-cols-[129px_81px_82px_76px] text-center">
                  {['评价项', '名义值', '测量值', '偏差'].map((h, i) => (
                    <div key={h} className={'h-[27px] flex items-center justify-center border-b border-[#9a9a9a] ' + (i < 3 ? 'border-r' : '')}>{h}</div>
                  ))}
                  <div className="h-[27px] flex items-center justify-center border-b border-r border-[#9a9a9a] whitespace-nowrap">宽度 (宽度1)</div>
                  <div className="h-[27px] flex items-center justify-center border-b border-r border-[#9a9a9a]">12.0000</div>
                  <div className="h-[27px] flex items-center justify-center border-b border-r border-[#9a9a9a] text-[#00cc20]">11.9948</div>
                  <div className="h-[27px] flex items-center justify-center border-b border-[#9a9a9a] text-[#00cc20]">-0.0052</div>
                  <div className="h-[27px] flex items-center justify-center border-r border-[#9a9a9a] whitespace-nowrap">对称度 (宽度1)</div>
                  <div className="h-[27px] flex items-center justify-center border-r border-[#9a9a9a]">0.0000</div>
                  <div className="h-[27px] flex items-center justify-center border-r border-[#9a9a9a] text-[#00cc20]">0.0161</div>
                  <div className="h-[27px] flex items-center justify-center text-[#00cc20]">0.0161</div>
                </div>
              </div>
            </div>
            <div className="flex-1 flex flex-col bg-[#e0e0e8] border-r border-[#555]">
              <div className="h-[25px] shrink-0 flex items-center justify-center bg-[#82868d]">
                <ChevronsUp size={18} strokeWidth={3} className="text-[#e8e8e8]" />
              </div>
              <div className="h-[48px] shrink-0 flex items-center justify-center"><Ic n="tAxes" w={34} h={30} /></div>
              <div className="pt-[1px]">
                {['tEye', 'tSphere', 'tFrame', 'tProbe', 'tMag', 'tCube', 'tFlag', 'tCam', 'tChat', 'tGrid'].map((n) => (
                  <div key={n} className="h-[49.6px] flex items-center justify-center"><Ic n={n} w={34} h={30} /></div>
                ))}
                <div className="h-[49.6px] flex flex-col items-center justify-center gap-px">
                  {['X 035', 'Y 102', 'Z 027'].map((t) => (
                    <div key={t} className="w-[29px] h-[9px] bg-[#14301c] text-center text-[7.5px] leading-[9px] font-bold text-[#20e020]">{t}</div>
                  ))}
                </div>
              </div>
            </div>
          </div>

          {/* results */}
          <div className="relative flex-1 min-h-0 flex flex-col overflow-hidden">
            <div className="h-[26px] shrink-0 flex items-center bg-[#717b85] pl-[14px] pr-[12px] text-[12px] text-[#f2f2f2]">
              结果栏
              <ChevronsDown size={18} strokeWidth={3} className="ml-auto text-[#e8e8e8]" />
            </div>
            <div className="flex flex-1 min-h-0 bg-[#f1f1f1]">
              <div className="w-[1434px] shrink-0">
                <div className="flex items-center h-[37px] pb-[6px] pt-[6px]">
                  <Ic n="sym" w={28} h={26} className="ml-[5px]" />
                  <div className="ml-[3px]"><Drop width="w-[299px]" text="对称度1" /></div>
                  <Ic n="axis2" w={19} h={26} className="ml-[10px]" />
                  <div className="ml-[7px]"><Drop width="w-[208px]" text="(由基准确定)" grey /></div>
                  <Ic n="projplane" w={25} h={24} className="ml-[8px]" />
                  <div className="ml-[5px]"><Drop width="w-[119px]" text="" grey /></div>
                  <Ic n="filter" w={26} h={22} className="ml-[16px]" />
                  <div className="ml-[4px]"><Drop width="w-[119px]" text="" grey /></div>
                  <Ic n="clock" w={24} h={26} className="ml-[17px]" />
                  <div className="ml-[5px]"><Field width="w-[140px]" text="2025-09-08 15:26:04" /></div>
                  <Ic n="cherries" w={20} h={26} className="ml-[16px]" />
                  <div className="ml-[10px]"><Field width="w-[118px]" /></div>
                  <Ic n="ring" w={27} h={25} className="ml-[16px]" />
                  <div className="ml-[3px]"><Field width="w-[60px]" text="8" /></div>
                </div>

                <div className="w-[981px] border-2 border-[#3f4855] bg-white font-['Liberation_Sans','Noto_Sans_CJK_SC',sans-serif] text-[12px] text-[#111]">
                  <div className="h-[28px] grid grid-cols-[291px_492px_1fr] items-center text-center bg-[#f1f1f1] border-b-[3px] border-[#3f4855] box-content">
                    <div className="h-full flex items-center justify-center border-r border-[#3f4855]">对称度1(宽度1)</div>
                    <div className="h-full flex items-center justify-center border-r border-[#3f4855]">
                      <div className="flex h-[17px] border border-[#222] text-[15px] leading-none">
                        <div className="w-[22px] flex items-center justify-center border-r border-[#222]">
                          <svg width="14" height="12" viewBox="0 0 14 12" stroke="#222" fill="none"><path d="M3 2H11M0 6H14M3 10H11" /></svg>
                        </div>
                        <div className="w-[37px] flex items-center justify-center border-r border-[#222] bg-white">0.02</div>
                        <div className="w-[19px] flex items-center justify-center bg-white">A</div>
                      </div>
                    </div>
                    <div>ISO_1101</div>
                  </div>
                  <div className="h-[20px] grid grid-cols-[22px_243px_repeat(8,81px)_1fr] items-center text-center bg-[#ebebeb] border-b-2 border-[#3f4855] box-content">
                    <div />
                    {['评价项', '名义值', '测量值', '上公差', '下公差', '偏差', '趋势', '超差', '补偿', '结果'].map((h) => (
                      <div key={h}>{h}</div>
                    ))}
                  </div>
                  {resultRows.map((r, i) => (
                    <div
                      key={r.name}
                      className={'h-[20px] grid grid-cols-[22px_243px_repeat(8,81px)_1fr] items-center text-center box-content ' + (i === 0 ? 'border-b-2 border-[#3f4855]' : '')}
                    >
                      <div className="pl-[1px]">
                        <div className="w-[17px] h-[17px] flex items-center justify-center bg-white border-2 border-[#222]">
                          <Check size={13} strokeWidth={3.5} color="#000" />
                        </div>
                      </div>
                      <div>{r.name}</div>
                      {r.vals.map((v, k) => (
                        <div key={k}>{v}</div>
                      ))}
                      <div className="flex justify-center"><Trend from={r.trend[0]} width={r.trend[1]} color={r.trend[2]} /></div>
                      <div>{r.over}</div>
                      <div />
                      <div className="font-bold text-[#10c010]">OK</div>
                    </div>
                  ))}
                </div>
              </div>

              <div className="pl-[0px] pt-[5px] grid grid-cols-[35px_35px] gap-x-[5px] gap-y-[8px] content-start">
                <ToolBtn><span className="text-[13px] font-bold text-[#1b2f82] font-['Liberation_Sans',sans-serif] tracking-[1px]">GDT</span></ToolBtn>
                <ToolBtn><Ic n="chart" s={30} /></ToolBtn>
                <ToolBtn><Ic n="up" s={26} /></ToolBtn>
                <ToolBtn><Ic n="clip" s={30} /></ToolBtn>
                <ToolBtn><Ic n="down" s={26} /></ToolBtn>
                <ToolBtn><Ic n="flag" s={28} /></ToolBtn>
                <ToolBtn><Ic n="refresh" s={28} /></ToolBtn>
                <ToolBtn><Ic n="tablegear" s={28} /></ToolBtn>
                <ToolBtn />
                <ToolBtn />
              </div>
            </div>
            <div className="absolute left-[1187px] top-[156px] whitespace-nowrap text-[32px] leading-[40px] text-[#c6c6c6]/80 [text-shadow:1px_1px_0_#fff] font-['Liberation_Sans','Noto_Sans_CJK_SC',sans-serif]">
              CSDN @心诚的文家
            </div>
          </div>
        </div>
      </div>
    </div>
  );
};

export default App;
